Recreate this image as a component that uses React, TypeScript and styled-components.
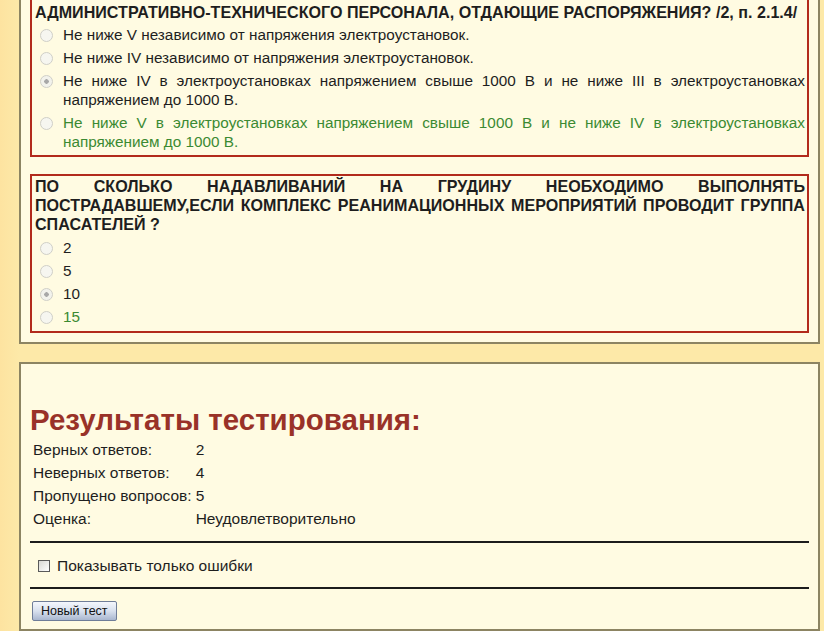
import { Fragment } from "react";
import styled, { createGlobalStyle } from "styled-components";

const GlobalStyle = createGlobalStyle`
  html, body {
    margin: 0;
    padding: 0;
    background: #fde6a0;
    font-family: "Liberation Sans", Arial, sans-serif;
    color: #1e1e1e;
    overflow: hidden;
  }
`;

const Page = styled.div`
  display: flex;
  flex-direction: column;
  gap: 18px;
  padding: 0 4px 0 19px;
  height: 631px;
  box-sizing: border-box;
  background: linear-gradient(90deg, #fde3a0 0px, #fde9a8 19px);
`;

const Panel = styled.section<{ $cut?: boolean }>`
  background: #fffbe2;
  border: 2px solid #8c8462;
  border-top: ${(p) => (p.$cut ? "none" : "2px solid #8c8462")};
  padding: ${(p) => (p.$cut ? "0 9px 9px" : "40px 9px 0")};
  display: flex;
  flex-direction: column;
  gap: ${(p) => (p.$cut ? "17px" : "0")};
  flex: ${(p) => (p.$cut ? "none" : "1")};
`;

const Question = styled.div<{ $cut?: boolean }>`
  border: 2px solid #b22a1c;
  border-top: ${(p) => (p.$cut ? "none" : "2px solid #b22a1c")};
  padding: ${(p) => (p.$cut ? "3px 2px 2px 3px" : "1px 2px 3px 3px")};
`;

const Title = styled.div<{ $gap: number }>`
  font-weight: bold;
  font-size: 16.1px;
  line-height: 19px;
  text-align: justify;
  margin-bottom: ${(p) => p.$gap}px;
`;

const Option = styled.div<{ $correct?: boolean }>`
  display: flex;
  align-items: flex-start;
  gap: 10px;
  padding: 2px 0 2px 5px;
  font-size: 15.3px;
  line-height: 19px;
  color: ${(p) => (p.$correct ? "#3b8a32" : "#1e1e1e")};
`;

const Radio = styled.span<{ $checked?: boolean }>`
  flex: none;
  width: 11px;
  height: 11px;
  margin-top: 4px;
  border-radius: 50%;
  border: 1px solid #cfcfc8;
  background: radial-gradient(circle, ${(p) => (p.$checked ? "#a8a8a8 0 2px, #f2f2ec 2.5px" : "#f6f6f0 0")});
`;

const OptionText = styled.span`
  flex: 1;
  text-align: justify;
`;

const Heading = styled.h1`
  margin: 0 0 2px;
  font-size: 29.5px;
  line-height: 32px;
  font-weight: bold;
  color: #993228;
`;

const Stats = styled.div`
  display: grid;
  grid-template-columns: max-content 1fr;
  column-gap: 4px;
  grid-auto-rows: 23px;
  align-items: center;
  padding-left: 3px;
  font-size: 15.5px;
`;

const Rule = styled.div<{ $top: number }>`
  height: 2px;
  background: #1c1c1c;
  margin-top: ${(p) => p.$top}px;
`;

const CheckRow = styled.label`
  display: flex;
  align-items: center;
  gap: 7px;
  height: 19px;
  margin-top: 13px;
  padding-left: 8px;
  font-size: 15.5px;
`;

const Box = styled.span`
  width: 10px;
  height: 10px;
  border: 1px solid #5a5a5a;
  background: linear-gradient(135deg, #d8d8d4, #ffffff);
`;

const Button = styled.button`
  align-self: flex-start;
  margin: 12px 0 0 2px;
  height: 20px;
  padding: 0 8px;
  font-family: "Liberation Sans", Arial, sans-serif;
  font-size: 12.5px;
  color: #111;
  border: 1px solid #6f7d98;
  border-radius: 2px;
  background: linear-gradient(180deg, #f4f7fc 0%, #d8e0ee 50%, #a9b7cf 100%);
`;

const first = {
  title: "АДМИНИСТРАТИВНО-ТЕХНИЧЕСКОГО ПЕРСОНАЛА, ОТДАЮЩИЕ РАСПОРЯЖЕНИЯ? /2, п. 2.1.4/",
  options: [
    "Не ниже V независимо от напряжения электроустановок.",
    "Не ниже IV независимо от напряжения электроустановок.",
    "Не ниже IV в электроустановках напряжением свыше 1000 В и не ниже III в электроустановках напряжением до 1000 В.",
    "Не ниже V в электроустановках напряжением свыше 1000 В и не ниже IV в электроустановках напряжением до 1000 В.",
  ],
  checked: 2,
  correct: 3,
};

const second = {
  title: "ПО СКОЛЬКО НАДАВЛИВАНИЙ НА ГРУДИНУ НЕОБХОДИМО ВЫПОЛНЯТЬ ПОСТРАДАВШЕМУ,ЕСЛИ КОМПЛЕКС РЕАНИМАЦИОННЫХ МЕРОПРИЯТИЙ ПРОВОДИТ ГРУППА СПАСАТЕЛЕЙ ?",
  options: ["2", "5", "10", "15"],
  checked: 2,
  correct: 3,
};

type Q = typeof first;

const QuestionBlock = ({ q, cut }: { q: Q; cut?: boolean }) => (
  <Question $cut={cut}>
    <Title $gap={cut ? 1 : 2}>{q.title}</Title>
    {q.options.map((o, i) => (
      <Option key={o} $correct={i === q.correct}>
        <Radio $checked={i === q.checked} />
        <OptionText>{o}</OptionText>
      </Option>
    ))}
  </Question>
);

const results = [
  ["Верных ответов:", "2"],
  ["Неверных ответов:", "4"],
  ["Пропущено вопросов:", "5"],
  ["Оценка:", "Неудовлетворительно"],
];

export default function App() {
  return (
    <>
      <GlobalStyle />
      <Page>
        <Panel $cut>
          <QuestionBlock q={first} cut />
          <QuestionBlock q={second} />
        </Panel>
        <Panel>
          <Heading>Результаты тестирования:</Heading>
          <Stats>
            {results.map(([k, v]) => (
              <Fragment key={k}>
                <span>{k}</span>
                <span>{v}</span>
              </Fragment>
            ))}
          </Stats>
          <Rule $top={11} />
          <CheckRow>
            <Box />
            Показывать только ошибки
          </CheckRow>
          <Rule $top={12} />
          <Button>Новый тест</Button>
        </Panel>
      </Page>
    </>
  );
}
